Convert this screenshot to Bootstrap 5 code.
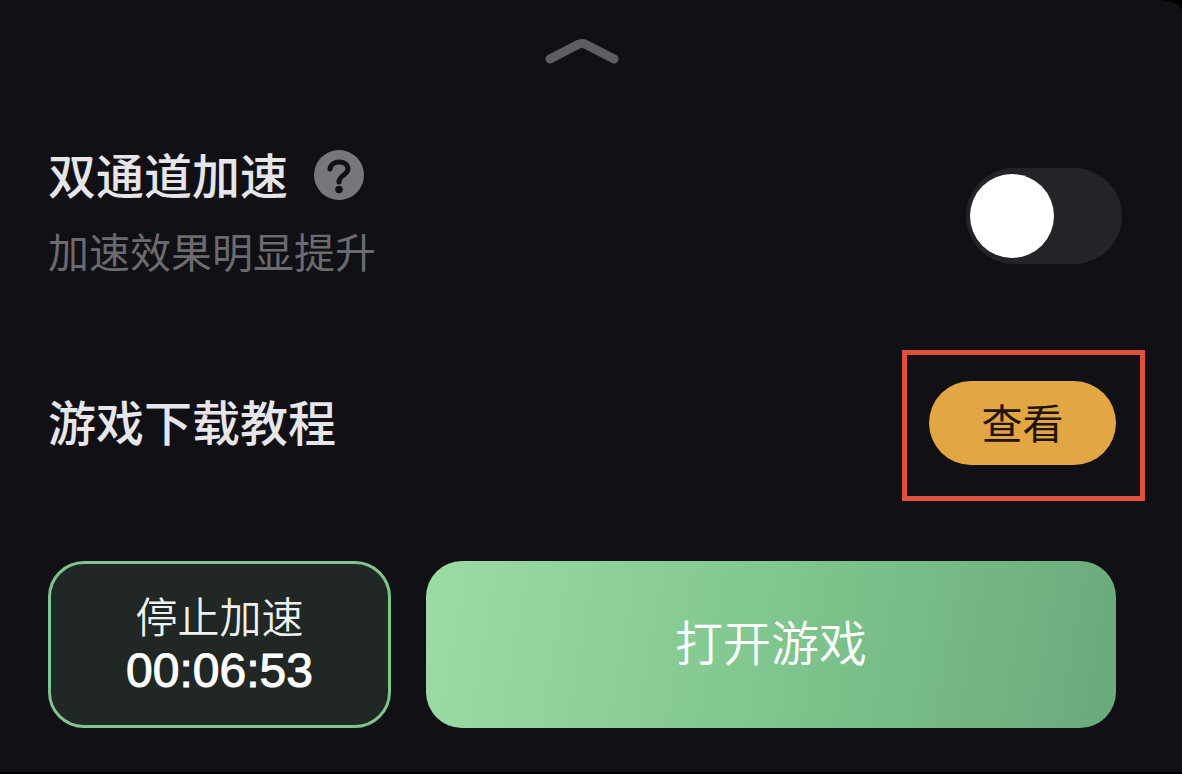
<!DOCTYPE html>
<html lang="zh-CN">
<head>
<meta charset="utf-8">
<meta name="viewport" content="width=device-width, initial-scale=1">
<title>游戏加速</title>
<link href="https://cdn.jsdelivr.net/npm/bootstrap@5.3.0/dist/css/bootstrap.min.css" rel="stylesheet">
<style>
  body { background: #000; font-family: "Liberation Sans", "Noto Sans CJK SC", sans-serif; }
  .sheet { background: #111015; border-top-right-radius: 22px 12px; padding: 36px 66px 44px 48px; }
  .handle { line-height: 0; }
  .setting-dual { margin-top: 82px; }
  .setting-guide { margin-top: 97px; }
  .actions { margin-top: 96px; gap: 35px; }
  .setting-title { font-size: 48px; line-height: 60px; font-weight: 500; color: #e6e5ea; }
  .setting-note { font-size: 41px; line-height: 60px; margin-top: 16px; color: #6b6a6f; font-weight: 400; }
  .help-btn { margin-left: 26px; padding-bottom: 6px; line-height: 0; }
  .form-switch .dual-switch {
    width: 156px; height: 96px; margin: 0 -6px 0 0; float: none; border: 0; border-radius: 48px;
    background-color: #242328; background-size: 84px 84px; background-position: 4px center;
    background-image: url("data:image/svg+xml,%3Csvg xmlns='http://www.w3.org/2000/svg' viewBox='0 0 84 84'%3E%3Ccircle cx='42' cy='42' r='42' fill='white'/%3E%3C/svg%3E");
  }
  .form-switch .dual-switch:checked { background-color: #7ec48c; background-position: 68px center; }
  .guide-title { padding-top: 4px; }
  .view-btn, .view-btn:hover { width: 187px; height: 84px; font-size: 41px; line-height: 60px; background: #e3a645; color: #1e1408; border: 0; }
  .highlight-frame { inset: -31px -29px -36px -27px; border: 5px solid #e0503f; pointer-events: none; }
  .action-btn, .action-btn:hover { height: 167px; border-radius: 36px; color: #fff; }
  .stop-btn, .stop-btn:hover { width: 343px; background: #202725; border: 3px solid #7fc38d; }
  .stop-label { font-size: 42px; line-height: 52px; color: #eef1f0; font-weight: 350; }
  .stop-time { font-size: 48px; line-height: 52px; font-weight: 500; -webkit-text-stroke: 1px #fff; }
  .open-btn, .open-btn:hover { font-size: 48px; font-weight: 350; border: 0; background: linear-gradient(100deg, #9bdca4 0%, #7fc58d 52%, #69aa7b 100%); }
</style>
</head>
<body>
<main class="sheet">
  <div class="text-center handle">
    <button type="button" class="btn p-0 border-0 handle" aria-label="展开">
      <svg width="76" height="30" viewBox="0 0 76 30" fill="none" stroke="#5e5d63" stroke-width="9" stroke-linecap="round" stroke-linejoin="round"><path d="M6 23 L34 8.500 Q38 6.500 42 8.500 L70 23"/></svg>
    </button>
  </div>

  <section class="setting-dual d-flex align-items-center justify-content-between">
    <div>
      <div class="d-flex align-items-center">
        <label class="setting-title" for="dual">双通道加速</label>
        <button type="button" class="btn px-0 pt-0 border-0 help-btn" aria-label="帮助">
          <svg width="50" height="50" viewBox="0 0 50 50"><circle cx="25" cy="25" r="25" fill="#77767b"/><path d="M16 19 C17 10 34 9.500 34 19 C34 25 25 25 25 32" fill="none" stroke="#111015" stroke-width="5" stroke-linecap="round"/><circle cx="25" cy="39.500" r="3.800" fill="#111015"/></svg>
        </button>
      </div>
      <p class="setting-note mb-0">加速效果明显提升</p>
    </div>
    <div class="form-check form-switch p-0 m-0 d-flex">
      <input class="form-check-input dual-switch" type="checkbox" role="switch" id="dual">
    </div>
  </section>

  <section class="setting-guide d-flex align-items-center justify-content-between">
    <h2 class="setting-title guide-title mb-0">游戏下载教程</h2>
    <div class="position-relative">
      <button type="button" class="btn rounded-pill px-0 pb-0 pt-1 view-btn d-block">查看</button>
      <span class="position-absolute highlight-frame"></span>
    </div>
  </section>

  <div class="actions d-flex">
    <button type="button" class="btn p-0 action-btn stop-btn flex-shrink-0">
      <span class="d-block stop-label">停止加速</span>
      <span class="d-block stop-time">00:06:53</span>
    </button>
    <button type="button" class="btn p-0 action-btn open-btn flex-grow-1">打开游戏</button>
  </div>
</main>
<script src="https://cdn.jsdelivr.net/npm/bootstrap@5.3.0/dist/js/bootstrap.bundle.min.js"></script>
</body>
</html>
